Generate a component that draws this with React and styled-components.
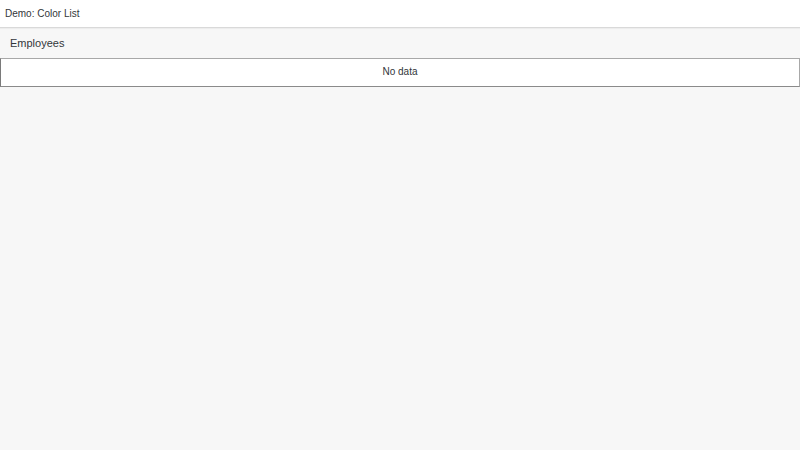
import React from "react";
import styled, { createGlobalStyle } from "styled-components";

const Global = createGlobalStyle`
  html, body { margin: 0; padding: 0; background: #f7f7f7; }
  body { font-family: "Liberation Sans", Arial, sans-serif; color: #32363a; }
  * { box-sizing: border-box; }
`;

const Page = styled.div`
  width: 800px;
  height: 450px;
  display: flex;
  flex-direction: column;
  background: #f7f7f7;
  overflow: hidden;
`;

const Header = styled.header`
  height: 28px;
  background: #ffffff;
  border-bottom: 1px solid #d9d9d9;
  box-shadow: 0 1px 1px rgba(0,0,0,0.04);
  display: flex;
  align-items: center;
  padding: 0 5px 1px;
  font-size: 10px;
  color: #32363a;
`;

const Toolbar = styled.div`
  height: 30px;
  display: flex;
  align-items: center;
  padding: 0 10px 1px;
  font-size: 11px;
  color: #32363a;
`;

const List = styled.div`
  height: 29px;
  background: #ffffff;
  border: 1px solid #a8a8a8;
  border-left-color: #7a7a7a;
  border-bottom-color: #8a8a8a;
  display: flex;
  align-items: center;
  justify-content: center;
  padding-bottom: 2px;
  font-size: 10px;
  color: #32363a;
`;

export default function App() {
  return (
    <>
      <Global />
      <Page>
        <Header>Demo: Color List</Header>
        <Toolbar>Employees</Toolbar>
        <List>No data</List>
      </Page>
    </>
  );
}
